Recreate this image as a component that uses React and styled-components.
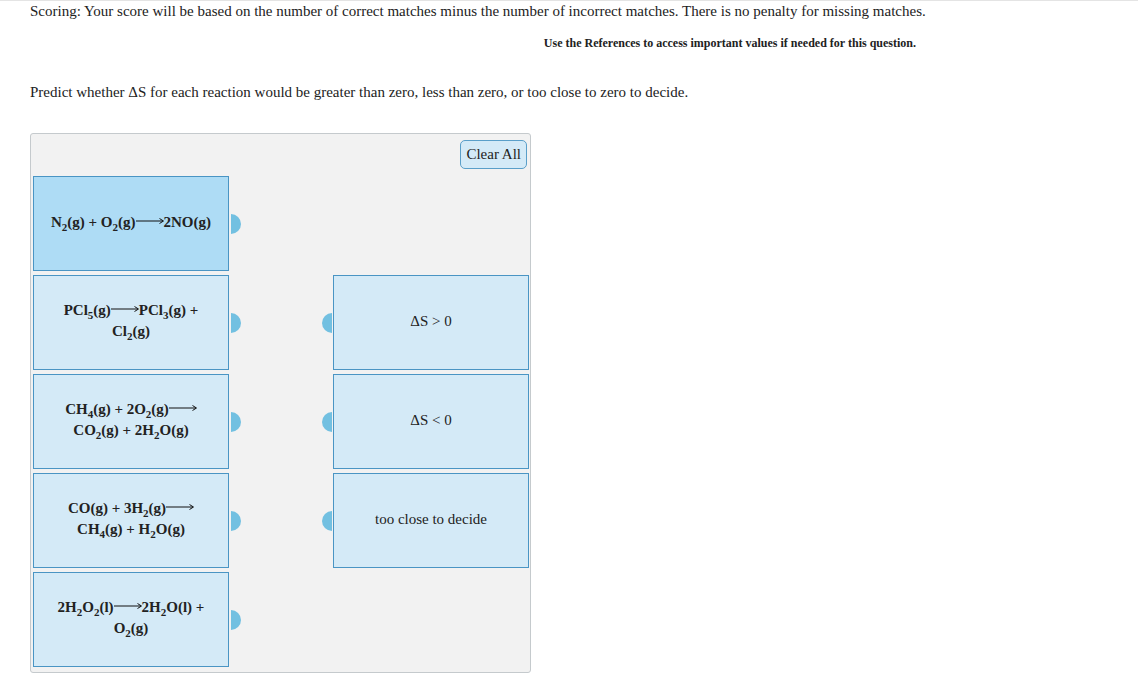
import React from 'react'
import styled, { createGlobalStyle } from 'styled-components';

const GlobalStyle = createGlobalStyle`
    body{
        margin: 0;
        background: #fff;
        font-family: "Liberation Serif", "Times New Roman", serif;
        color: #222;
    }
`;

const reactions = [
    [[<>N<sub>2</sub>(g) + O<sub>2</sub>(g)</>, 'arrow', '2NO(g)']],
    [[<>PCl<sub>5</sub>(g)</>, 'arrow', <>PCl<sub>3</sub>(g) +</>], [<>Cl<sub>2</sub>(g)</>]],
    [[<>CH<sub>4</sub>(g) + 2O<sub>2</sub>(g)</>, 'arrow'], [<>CO<sub>2</sub>(g) + 2H<sub>2</sub>O(g)</>]],
    [[<>CO(g) + 3H<sub>2</sub>(g)</>, 'arrow'], [<>CH<sub>4</sub>(g) + H<sub>2</sub>O(g)</>]],
    [[<>2H<sub>2</sub>O<sub>2</sub>(l)</>, 'arrow', <>2H<sub>2</sub>O(l) +</>], [<>O<sub>2</sub>(g)</>]],
];

const answers = ['ΔS > 0', 'ΔS < 0', 'too close to decide'];

function Arrow() {
    return (
        <ArrowSvg width="28" height="8" viewBox="0 0 28 8">
            <line x1="0" y1="4" x2="27" y2="4" stroke="#111" strokeWidth="1" />
            <path d="M23.5 1.5 L27.5 4 L23.5 6.5" fill="none" stroke="#111" strokeWidth="1" />
        </ArrowSvg>
    );
}

function Equation({ lines }) {
    return (
        <EquationText>
            {lines.map((line, i) => (
                <EquationLine key={i}>
                    {line.map((part, j) => part === 'arrow' ? <Arrow key={j} /> : <React.Fragment key={j}>{part}</React.Fragment>)}
                </EquationLine>
            ))}
        </EquationText>
    );
}

function App() {
    return (
        <Page>
            <GlobalStyle />
            <Scoring>Scoring: Your score will be based on the number of correct matches minus the number of incorrect matches. There is no penalty for missing matches.</Scoring>
            <References>Use the References to access important values if needed for this question.</References>
            <Prompt>Predict whether ΔS for each reaction would be greater than zero, less than zero, or too close to zero to decide.</Prompt>
            <Board>
                <BoardHeader>
                    <ClearButton>Clear All</ClearButton>
                </BoardHeader>
                <MatchGrid>
                    {reactions.map((lines, i) => (
                        <React.Fragment key={i}>
                            <Item $active={i === 0}>
                                <Equation lines={lines} />
                                <Connector $side="right" />
                            </Item>
                            {i > 0 && i <= answers.length ? (
                                <Item>
                                    <AnswerText>{answers[i - 1]}</AnswerText>
                                    <Connector $side="left" />
                                </Item>
                            ) : <div />}
                        </React.Fragment>
                    ))}
                </MatchGrid>
            </Board>
        </Page>
    )
}

const Page = styled.div`
    border-top: 1px solid #e4e4e4;
    padding: 2px 30px 0;
`;

const Scoring = styled.p`
    margin: 0;
    font-size: 15px;
    line-height: 17px;
`;

const References = styled.p`
    margin: 16px 0 0;
    width: 886px;
    text-align: right;
    font-size: 12px;
    line-height: 14px;
    font-weight: 700;
`;

const Prompt = styled.p`
    margin: 34px 0 0;
    font-size: 15px;
    line-height: 17px;
`;

const Board = styled.div`
    margin-top: 32px;
    width: 501px;
    box-sizing: border-box;
    background: #f2f2f2;
    border: 1px solid #c5cacd;
    border-radius: 3px;
    padding: 0 2px 5px;
`;

const BoardHeader = styled.div`
    display: flex;
    justify-content: flex-end;
    padding: 6px 1px 0;
    margin-bottom: 7px;
`;

const ClearButton = styled.button`
    height: 29px;
    padding: 0 5px;
    background: #d4eaf7;
    border: 1px solid #5a9fc9;
    border-radius: 5px;
    font-family: "Liberation Serif", "Times New Roman", serif;
    font-size: 15px;
    color: #222;
`;

const MatchGrid = styled.div`
    display: grid;
    grid-template-columns: 196px 196px;
    grid-auto-rows: 95px;
    column-gap: 104px;
    row-gap: 4px;
`;

const Item = styled.div`
    position: relative;
    box-sizing: border-box;
    display: flex;
    align-items: center;
    justify-content: center;
    background: ${p => p.$active ? '#aedcf5' : '#d4eaf7'};
    border: 1px solid #4a95c4;
    text-align: center;
`;

const Connector = styled.span`
    position: absolute;
    top: 50%;
    width: 10px;
    height: 20px;
    margin-top: -10px;
    background: #72c0e1;
    ${p => p.$side === 'right'
        ? 'left: calc(100% + 3px); border-radius: 0 10px 10px 0;'
        : 'right: calc(100% + 2px); border-radius: 10px 0 0 10px;'}
`;

const EquationText = styled.div`
    font-weight: 700;
    font-size: 15px;
    margin-top: -3px;
    sub{
        font-size: 11px;
        line-height: 0;
        vertical-align: -4px;
    }
`;

const EquationLine = styled.div`
    height: 21px;
    line-height: 20px;
`;

const ArrowSvg = styled.svg`
    display: inline-block;
    vertical-align: 2px;
`;

const AnswerText = styled.div`
    font-size: 15px;
    line-height: 18px;
    margin-top: -3px;
`;

export default App;
